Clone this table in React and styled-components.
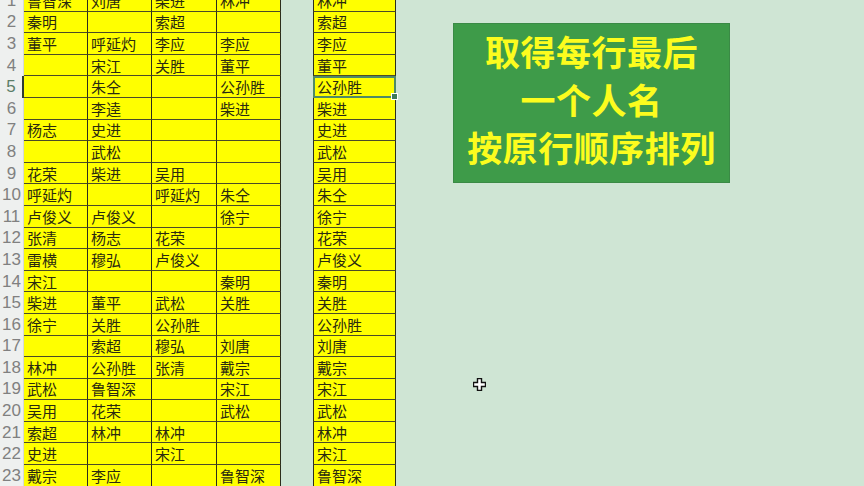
import React from "react";
import styled, { createGlobalStyle } from "styled-components";

const GlobalStyle = createGlobalStyle`
  html, body {
    margin: 0;
    padding: 0;
    background: #cfe5d4;
    overflow: hidden;
  }
`;

const Page = styled.div`
  position: relative;
  display: flex;
  align-items: flex-start;
  width: 864px;
  height: 486px;
  overflow: hidden;
  background: #cfe5d4;
  font-family: "Noto Sans CJK SC", "Noto Sans", sans-serif;
`;

const Sheet = styled.div`
  display: grid;
  grid-template-columns: 24px 64px 64px 65px 64px 32px 83px;
  grid-auto-rows: 21.6px;
  margin-top: -10px;
`;

const RowHead = styled.div`
  background: #eef0ef;
  color: ${(p) => (p.$active ? "#5b7d68" : "#808080")};
  font-family: "Liberation Sans", Arial, sans-serif;
  font-size: 17px;
  display: flex;
  align-items: center;
  justify-content: center;
  box-sizing: border-box;
  border-right: ${(p) => (p.$active ? "2px solid #2f3a33" : "1px solid #d6d9d7")};
`;

const Cell = styled.div`
  background: #ffff00;
  color: #2a2a10;
  font-size: 15px;
  line-height: 1;
  display: flex;
  align-items: center;
  padding-left: 3px;
  box-sizing: border-box;
  border-right: 1px solid #2d2d1c;
  border-bottom: 1px solid #4b4b28;
  white-space: nowrap;
`;

const Gap = styled.div`
  background: #cfe5d4;
`;

const ResultCell = styled(Cell)`
  position: relative;
  border-left: 1px solid #2d2d1c;
  ${(p) =>
    p.$selected &&
    `
    outline: 2px solid #4f8a66;
    outline-offset: -2px;
    z-index: 2;
  `}
`;

const Handle = styled.span`
  position: absolute;
  right: -3px;
  bottom: -3px;
  width: 5px;
  height: 5px;
  background: #3f7c58;
  border: 1px solid #ffffff;
`;

const Note = styled.div`
  margin-left: 57px;
  margin-top: 23px;
  width: 277px;
  height: 160px;
  box-sizing: border-box;
  padding-bottom: 8px;
  background: #3e9b49;
  border: 1px solid #3a8a45;
  display: flex;
  flex-direction: column;
  align-items: center;
  justify-content: center;
  color: #fcfc1e;
  font-family: "Noto Sans CJK SC", sans-serif;
  font-weight: 700;
  font-size: 35px;
  line-height: 48px;
  letter-spacing: 0.5px;
`;

const Cursor = styled.svg`
  position: absolute;
  left: 473px;
  top: 378px;
`;

const rows = [
  ["鲁智深", "刘唐", "柴进", "林冲", "林冲"],
  ["秦明", "", "索超", "", "索超"],
  ["董平", "呼延灼", "李应", "李应", "李应"],
  ["", "宋江", "关胜", "董平", "董平"],
  ["", "朱仝", "", "公孙胜", "公孙胜"],
  ["", "李逵", "", "柴进", "柴进"],
  ["杨志", "史进", "", "", "史进"],
  ["", "武松", "", "", "武松"],
  ["花荣", "柴进", "吴用", "", "吴用"],
  ["呼延灼", "", "呼延灼", "朱仝", "朱仝"],
  ["卢俊义", "卢俊义", "", "徐宁", "徐宁"],
  ["张清", "杨志", "花荣", "", "花荣"],
  ["雷横", "穆弘", "卢俊义", "", "卢俊义"],
  ["宋江", "", "", "秦明", "秦明"],
  ["柴进", "董平", "武松", "关胜", "关胜"],
  ["徐宁", "关胜", "公孙胜", "", "公孙胜"],
  ["", "索超", "穆弘", "刘唐", "刘唐"],
  ["林冲", "公孙胜", "张清", "戴宗", "戴宗"],
  ["武松", "鲁智深", "", "宋江", "宋江"],
  ["吴用", "花荣", "", "武松", "武松"],
  ["索超", "林冲", "林冲", "", "林冲"],
  ["史进", "", "宋江", "", "宋江"],
  ["戴宗", "李应", "", "鲁智深", "鲁智深"],
];

const App = () => {
  return (
    <Page>
      <GlobalStyle />
      <Sheet>
        {rows.map((r, i) => {
          const selected = i === 4;
          return (
            <React.Fragment key={i}>
              <RowHead $active={selected}>{i + 1}</RowHead>
              <Cell>{r[0]}</Cell>
              <Cell>{r[1]}</Cell>
              <Cell>{r[2]}</Cell>
              <Cell>{r[3]}</Cell>
              <Gap />
              <ResultCell $selected={selected}>
                {r[4]}
                {selected && <Handle />}
              </ResultCell>
            </React.Fragment>
          );
        })}
      </Sheet>
      <Note>
        <div>取得每行最后</div>
        <div>一个人名</div>
        <div>按原行顺序排列</div>
      </Note>
      <Cursor width="13" height="13" viewBox="0 0 13 13">
        <path
          d="M4.5 0.5h4v4h4v4h-4v4h-4v-4h-4v-4h4z"
          fill="#ffffff"
          stroke="#111111"
          strokeWidth="1.4"
        />
      </Cursor>
    </Page>
  );
};

export default App;
